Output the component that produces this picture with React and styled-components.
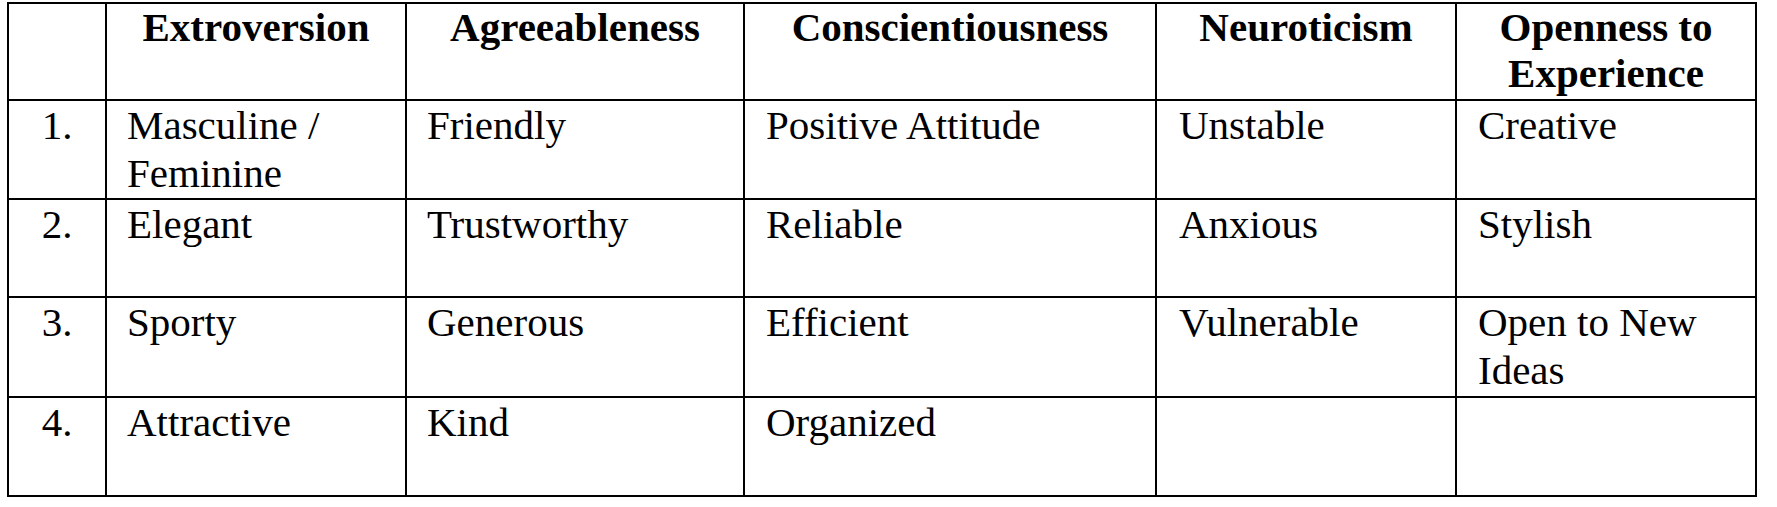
import React from "react";
import styled, { createGlobalStyle } from "styled-components";

const Global = createGlobalStyle`
  html, body { margin: 0; padding: 0; background: #ffffff; }
  body { font-family: "Liberation Serif", "Times New Roman", serif; color: #000; }
`;

const Page = styled.div`
  padding: 2px 0 0 7px;
`;

const Grid = styled.div`
  display: grid;
  grid-template-columns: 98px 300px 338px 412px 300px 300px;
  grid-template-rows: 97px 99px 98px 100px 99px;
  width: max-content;
  border-left: 2px solid #000;
  border-top: 2px solid #000;
`;

const Cell = styled.div`
  border-right: 2px solid #000;
  border-bottom: 2px solid #000;
  font-size: 41px;
  line-height: 48px;
  padding: 0 8px 0 ${(p) => p.$pl ?? 20}px;
  text-align: left;
  overflow: hidden;
`;

const HeadCell = styled(Cell)`
  font-weight: bold;
  text-align: center;
  line-height: 46px;
  padding: 0 4px;
`;

const NumCell = styled(Cell)`
  text-align: center;
  padding: 0;
`;

const headers = [
  "",
  "Extroversion",
  "Agreeableness",
  "Conscientiousness",
  "Neuroticism",
  "Openness to Experience",
];

const rows = [
  ["1.", "Masculine / Feminine", "Friendly", "Positive Attitude", "Unstable", "Creative"],
  ["2.", "Elegant", "Trustworthy", "Reliable", "Anxious", "Stylish"],
  ["3.", "Sporty", "Generous", "Efficient", "Vulnerable", "Open to New Ideas"],
  ["4.", "Attractive", "Kind", "Organized", "", ""],
];

const pads = [20, 20, 21, 22, 21];

export default function App() {
  return (
    <>
      <Global />
      <Page>
        <Grid>
          {headers.map((h, i) => (
            <HeadCell key={"h" + i}>{h}</HeadCell>
          ))}
          {rows.map((r, ri) =>
            r.map((c, ci) =>
              ci === 0 ? (
                <NumCell key={ri + "-" + ci}>{c}</NumCell>
              ) : (
                <Cell key={ri + "-" + ci} $pl={pads[ci - 1]}>
                  {c}
                </Cell>
              )
            )
          )}
        </Grid>
      </Page>
    </>
  );
}
